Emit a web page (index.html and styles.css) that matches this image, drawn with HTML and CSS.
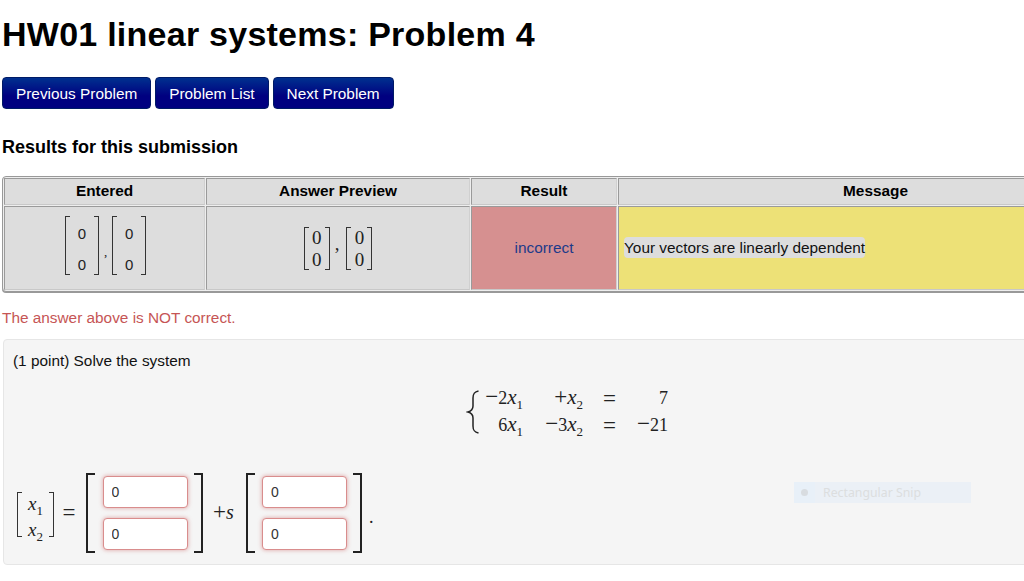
FILE: index.html
```html
<!DOCTYPE html>
<html lang="en">
<head>
<meta charset="utf-8">
<title>HW01 linear systems: Problem 4</title>
<link rel="stylesheet" href="styles.css">
</head>
<body>
<h1 class="title">HW01 linear systems: Problem 4</h1>
<nav class="nav">
  <a class="btn">Previous Problem</a>
  <a class="btn">Problem List</a>
  <a class="btn">Next Problem</a>
</nav>
<h2 class="subtitle">Results for this submission</h2>
<table class="results">
  <colgroup><col class="c1"><col class="c2"><col class="c3"><col class="c4"></colgroup>
  <tr class="head"><th>Entered</th><th>Answer Preview</th><th>Result</th><th>Message</th></tr>
  <tr class="body">
    <td>
      <div class="math entered">
        <div class="bm tall"><span>0</span><span>0</span></div><span class="comma low">,</span><div class="bm tall"><span>0</span><span>0</span></div>
      </div>
    </td>
    <td>
      <div class="math preview">
        <div class="bm short"><span>0</span><span>0</span></div><span class="comma">,</span><div class="bm short"><span>0</span><span>0</span></div>
      </div>
    </td>
    <td class="bad">incorrect</td>
    <td class="msg"><span class="chip">Your vectors are linearly dependent</span></td>
  </tr>
</table>
<p class="verdict">The answer above is NOT correct.</p>
<section class="problem">
  <p class="intro">(1 point) Solve the system</p>
  <div class="system">
    <svg class="brace" viewBox="0 0 14 44" width="14" height="44" aria-hidden="true"><path d="M12.5 1C8 2 7 4 7 8V16C7 19 5.5 21 2 22C5.5 23 7 25 7 28V36C7 40 8 42 12.5 43" fill="none" stroke="#222" stroke-width="1.5"/></svg>
    <div class="eqs">
      <span class="r"><span class="sym">−</span>2<i>x</i><sub>1</sub></span><span class="r"><span class="sym">+</span><i>x</i><sub>2</sub></span><span class="c sym">=</span><span class="r">7</span>
      <span class="r">6<i>x</i><sub>1</sub></span><span class="r"><span class="sym">−</span>3<i>x</i><sub>2</sub></span><span class="c sym">=</span><span class="r"><span class="sym">−</span>21</span>
    </div>
  </div>
  <div class="answer">
    <div class="bm vars"><span><i>x</i><sub>1</sub></span><span><i>x</i><sub>2</sub></span></div>
    <span class="op eq sym">=</span>
    <div class="bm big"><input class="field" value="0"><input class="field" value="0"></div>
    <span class="op plus"><span class="sym">+</span><i>s</i></span>
    <div class="bm big second"><input class="field" value="0"><input class="field" value="0"></div>
    <span class="dot">.</span>
  </div>
  <div class="snip"><span class="snip-icon"><b></b></span><span class="snip-label">Rectangular Snip</span></div>
</section>
</body>
</html>
```
FILE: styles.css
```css
html, body { margin: 0; padding: 0; }
body {
  width: 1024px;
  height: 581px;
  overflow: hidden;
  background: #fff;
  color: #000;
  font-family: "Liberation Sans", Arial, sans-serif;
  font-size: 15.36px;
  padding-left: 2px;
  box-sizing: border-box;
}
.title {
  margin: 0;
  padding-top: 14px;
  font-size: 34px;
  line-height: 40px;
  font-weight: 700;
  letter-spacing: 0.25px;
}
.nav { display: flex; gap: 4px; margin-top: 23px; }
.btn {
  height: 32px;
  padding: 2px 13px 0;
  display: flex;
  align-items: center;
  color: #fff;
  font-size: 15.36px;
  background: linear-gradient(#00308f, #000080 60%);
  border: 1px solid #001a66;
  border-radius: 4px;
  box-sizing: border-box;
}
.subtitle { margin: 28px 0 0; font-size: 18px; line-height: 20px; font-weight: 700; }
.results {
  margin-top: 19px;
  width: 1131px;
  table-layout: fixed;
  border-collapse: separate;
  border-spacing: 1px;
  border: 1px solid #999;
  border-radius: 4px;
  background: #eee;
  box-shadow: 0 1px 0 #999;
}
.c1 { width: 201px; } .c2 { width: 264px; } .c3 { width: 146px; } .c4 { width: 515px; }
.results th, .results td {
  background: #ddd;
  border: 1px solid;
  border-color: #9a9a9a #d0d0d0 #c8c8c8 #9a9a9a;
  text-align: center;
  padding: 0;
}
.results .head th { height: 27px; padding-bottom: 2px; box-sizing: border-box; font-size: 15.36px; }
.body td { height: 82px; }
.results td.bad { background: #d69090; color: #1d3a8a; }
.results td.msg { background: #ede177; text-align: left; padding-left: 5px; padding-right: 160px; }
.chip { background: #ddd; border-radius: 4px; padding: 2px 0; color: #111; }
.math { font-family: "Liberation Serif", serif; display: flex; justify-content: center; align-items: center; color: #222; }
.bm { position: relative; display: flex; flex-direction: column; align-items: center; box-sizing: border-box; }
.bm::before, .bm::after {
  content: "";
  position: absolute;
  top: 0; bottom: 0;
  width: 4px;
  border: 1.5px solid #333;
}
.bm::before { left: 0; border-right: 0; }
.bm::after { right: 0; border-left: 0; }
.entered { padding: 0 0 6px 2px; }
.tall { width: 34px; height: 59px; justify-content: space-between; padding: 9px 0 1px; font-family: "Liberation Sans", sans-serif; font-size: 15px; line-height: 18px; }
.comma { font-size: 14px; margin: 0 4px; }
.comma.low { margin: 14px 5px 0 5px; font-size: 13px; }
.short { width: 26px; height: 43px; justify-content: space-between; font-size: 19px; line-height: 21px; }
.preview .comma { font-size: 19px; margin: -8px 7px 0 5px; }
.verdict { margin: 16px 0 0; line-height: 20px; color: #c65555; font-size: 15.36px; }
.problem {
  position: relative;
  margin: 11px 0 0 1px;
  width: 1060px;
  height: 226px;
  box-sizing: border-box;
  background: #f5f5f5;
  border: 1px solid #e6e6e6;
  border-radius: 4px;
  padding: 11px 9px 0;
}
.intro { margin: 0; line-height: 20px; color: #111; }
.system {
  display: flex;
  align-items: center;
  gap: 3px;
  margin: 16px 0 0 453px;
  font-family: "Liberation Serif", serif;
  font-size: 18px;
  color: #222;
}
.eqs {
  display: grid;
  grid-template-columns: 40px 40px 13px 32px;
  column-gap: 20px;
  row-gap: 4px;
  line-height: 23px;
}
.r { text-align: right; white-space: nowrap; }
.sym { font-size: 23px; line-height: 0; }
.eqs .c { text-align: center; line-height: 23px; }
i { font-size: 21px; line-height: 0; }
sub { font-size: 13px; line-height: 0; }
.answer {
  display: flex;
  align-items: center;
  margin: 36px 0 0 4px;
  height: 80px;
  font-family: "Liberation Serif", serif;
  font-size: 18px;
  color: #222;
}
.vars { width: 37px; height: 45px; justify-content: space-between; padding: 5px 0 0; line-height: 14px; margin-top: 3px; }
.vars i { font-size: 19px; }
.op.eq { width: 14px; margin: 0 10px 0 8px; text-align: center; }
.big { width: 117px; height: 80px; justify-content: space-between; padding: 3px 0 3px 1px; }
.big::before, .big::after { width: 7px; border-width: 2px; border-color: #222; }
.plus { margin: 0 10px; width: 23px; white-space: nowrap; }
.plus i { font-size: 20px; }
.second { width: 116px; }
.dot { margin-left: 7px; margin-top: 8px; }
.field {
  width: 85px;
  height: 32px;
  box-sizing: border-box;
  border: 1px solid #d98d8d;
  border-radius: 4px;
  padding: 0 8px;
  background: #fff;
  color: #333;
  font-family: "Liberation Sans", sans-serif;
  font-size: 14px;
  box-shadow: 0 0 4px rgba(200, 90, 90, .55);
  outline: none;
}
.snip {
  position: absolute;
  left: 790px;
  top: 142px;
  width: 177px;
  height: 21px;
  display: flex;
  align-items: center;
  background: #ebf0f6;
  font-family: "Noto Sans", sans-serif;
  font-size: 12.3px;
  color: #dcdedf;
}
.snip-icon { width: 21px; height: 21px; background: #e8f0f8; display: flex; align-items: center; justify-content: center; margin-right: 8px; }
.snip-icon b { width: 7px; height: 7px; border-radius: 50%; background: #d8dce0; }
```
